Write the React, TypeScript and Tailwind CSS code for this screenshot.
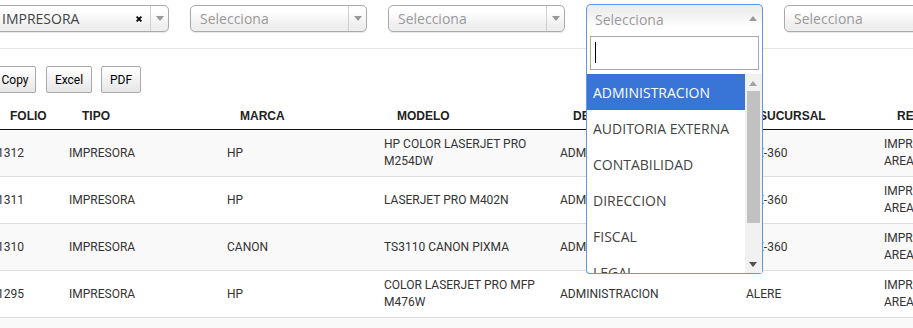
import React from "react";

interface Equipo {
  folio: string;
  tipo: string;
  marca: string;
  modelo: string;
  depto: string;
  sucursal: string;
  resp: string[];
}

const equipos: Equipo[] = [
  { folio: "1312", tipo: "IMPRESORA", marca: "HP", modelo: "HP COLOR LASERJET PRO M254DW", depto: "ADMINISTRACION", sucursal: "MX-360", resp: ["IMPRESORA COMPARTIDA", "AREA ADMINISTRATIVA"] },
  { folio: "1311", tipo: "IMPRESORA", marca: "HP", modelo: "LASERJET PRO M402N", depto: "ADMINISTRACION", sucursal: "MX-360", resp: ["IMPRESORA COMPARTIDA", "AREA ADMINISTRATIVA"] },
  { folio: "1310", tipo: "IMPRESORA", marca: "CANON", modelo: "TS3110 CANON PIXMA", depto: "ADMINISTRACION", sucursal: "MX-360", resp: ["IMPRESORA COMPARTIDA", "AREA ADMINISTRATIVA"] },
  { folio: "1295", tipo: "IMPRESORA", marca: "HP", modelo: "COLOR LASERJET PRO MFP M476W", depto: "ADMINISTRACION", sucursal: "ALERE", resp: ["IMPRESORA COMPARTIDA", "AREA ADMINISTRATIVA"] },
  { folio: "1288", tipo: "IMPRESORA", marca: "HP", modelo: "LASERJET M1212NF", depto: "ADMINISTRACION", sucursal: "ALERE", resp: ["IMPRESORA COMPARTIDA"] },
];

const opciones = ["ADMINISTRACION", "AUDITORIA EXTERNA", "CONTABILIDAD", "DIRECCION", "FISCAL", "LEGAL"];

const columnas = ["FOLIO", "TIPO", "MARCA", "MODELO", "DEPARTAMENTO", "SUCURSAL", "RESPONSABLE"];

const selectFont = "font-['Open_Sans','Noto_Sans',sans-serif]";
const tableFont = "font-['Tahoma','Roboto',sans-serif]";

function ArrowDown({ color = "#999" }: { color?: string }) {
  return (
    <svg width="8" height="5" viewBox="0 0 8 5">
      <path d="M0 0 L8 0 L4 5 Z" fill={color} />
    </svg>
  );
}

function ArrowUp({ color = "#999" }: { color?: string }) {
  return (
    <svg width="8" height="5" viewBox="0 0 8 5">
      <path d="M0 5 L8 5 L4 0 Z" fill={color} />
    </svg>
  );
}

function ClosedSelect({ value, clearable }: { value?: string; clearable?: boolean }) {
  return (
    <div className="relative h-[27px] w-[177px] shrink-0 rounded-[5px] border border-[#aaa] bg-gradient-to-b from-white from-20% to-[#eee] to-80% shadow-[0_1px_1px_rgba(0,0,0,0.1)]">
      <div className={`flex h-full items-center pl-[9px] text-[14px] ${selectFont} ${value ? "text-[#444]" : "text-[#999]"}`}>
        {value ?? "Selecciona"}
      </div>
      {clearable && (
        <svg className="absolute right-[26px] top-[10px]" width="6" height="6" viewBox="0 0 6 6">
          <path d="M0.6 0.6 L5.4 5.4 M5.4 0.6 L0.6 5.4" stroke="#000" strokeWidth="1.8" />
        </svg>
      )}
      <div className="absolute bottom-0 right-0 top-0 flex w-[18px] items-center justify-center border-l border-[#d0d0d0]">
        <ArrowDown />
      </div>
    </div>
  );
}

function OpenSelect() {
  return (
    <div className="relative z-10 -mt-px h-[29px] w-[177px] shrink-0">
      <div className="flex h-full items-center rounded-t-[5px] border border-b-0 border-[#5897fb] bg-gradient-to-b from-[#eee] from-20% to-white to-80% pl-[8px]">
        <span className={`text-[14px] text-[#999] ${selectFont}`}>Selecciona</span>
        <span className="absolute right-[6px] top-[12px] flex">
          <ArrowUp />
        </span>
      </div>
      <div className="absolute left-0 top-full w-full rounded-b-[4px] border border-t-0 border-[#5897fb] bg-white">
        <div className="px-[3px] pb-[4px] pt-[3px]">
          <div className="relative h-[34px] w-full border border-[#aaa] bg-white">
            <div className="absolute left-[4px] top-[5px] h-[21px] w-px bg-black" />
          </div>
        </div>
        <div className="flex h-[199px]">
          <ul className={`h-full flex-1 overflow-hidden text-[14px] text-[#444] ${selectFont}`}>
            {opciones.map((o, i) => (
              <li
                key={o}
                className={`flex h-[36px] items-center px-[6px] ${i === 0 ? "bg-[#3875d7] text-white" : ""}`}
              >
                {o}
              </li>
            ))}
          </ul>
          {/* fake scrollbar */}
          <div className="relative w-[17px] bg-[#f1f1f1]">
            <span className="absolute left-[4px] top-[7px] flex">
              <ArrowUp color="#a3a3a3" />
            </span>
            <div className="absolute left-[2px] right-[2px] top-[17px] h-[132px] bg-[#c1c1c1]" />
            <span className="absolute bottom-[6px] left-[4px] flex">
              <ArrowDown color="#505050" />
            </span>
          </div>
        </div>
      </div>
    </div>
  );
}

function Boton({ label, w }: { label: string; w: string }) {
  return (
    <button
      className={`${w} h-[27px] shrink-0 rounded-[2px] border border-[#aaa] bg-gradient-to-b from-white to-[#e6e6e6] text-[12px] text-black ${tableFont}`}
    >
      {label}
    </button>
  );
}

export default function App() {
  return (
    <div className="relative h-[328px] w-[913px] overflow-hidden bg-white">
      {/* Filtros */}
      <div className="border-b border-[#e5e5e5] pb-[16px] pt-[5px]">
        <div className="-ml-[8px] flex h-[27px] items-start gap-[21px]">
          <ClosedSelect value="IMPRESORA" clearable />
          <ClosedSelect />
          <ClosedSelect />
          <OpenSelect />
          <ClosedSelect />
        </div>
      </div>

      {/* Export buttons */}
      <div className="-ml-[6px] mt-[17px] flex">
        <Boton label="Copy" w="w-[42px] mr-[10px]" />
        <Boton label="Excel" w="w-[46px] mr-[9px]" />
        <Boton label="PDF" w="w-[40px]" />
      </div>

      <table className={`-ml-[13px] mt-[7px] w-[1057px] table-fixed border-collapse text-[12px] text-[#333] ${tableFont}`}>
        <colgroup>
          <col className="w-[72px]" />
          <col className="w-[158px]" />
          <col className="w-[157px]" />
          <col className="w-[176px]" />
          <col className="w-[186px]" />
          <col className="w-[138px]" />
          <col className="w-[170px]" />
        </colgroup>
        <thead>
          <tr className="border-b border-[#111]">
            {columnas.map((c) => (
              <th
                key={c}
                className="pb-[4px] pl-[23px] pr-[10px] pt-[8px] text-left text-[12px] font-bold leading-[17px] text-[#222] font-['Liberation_Sans',Arial,sans-serif]"
              >
                {c}
              </th>
            ))}
          </tr>
        </thead>
        <tbody>
          {equipos.map((e, i) => (
            <tr
              key={e.folio}
              className={`${i > 0 ? "border-t border-[#ddd]" : ""} ${i % 2 === 0 ? "bg-[#f9f9f9]" : "bg-white"} ${i === 4 ? "h-[64px]" : ""}`}
            >
              <td className="px-[10px] py-[6px] align-middle leading-[17px]">{e.folio}</td>
              <td className="px-[10px] py-[6px] align-middle leading-[17px]">{e.tipo}</td>
              <td className="px-[10px] py-[6px] align-middle leading-[17px]">{e.marca}</td>
              <td className="px-[10px] py-[6px] align-middle leading-[17px]">{e.modelo}</td>
              <td className="px-[10px] py-[6px] align-middle leading-[17px]">{e.depto}</td>
              <td className="px-[10px] py-[6px] align-middle leading-[17px]">{e.sucursal}</td>
              <td className="px-[10px] py-[6px] align-middle leading-[17px] whitespace-nowrap">
                {e.resp.map((r) => (
                  <span key={r} className="block">{r}</span>
                ))}
              </td>
            </tr>
          ))}
        </tbody>
      </table>
    </div>
  );
}
